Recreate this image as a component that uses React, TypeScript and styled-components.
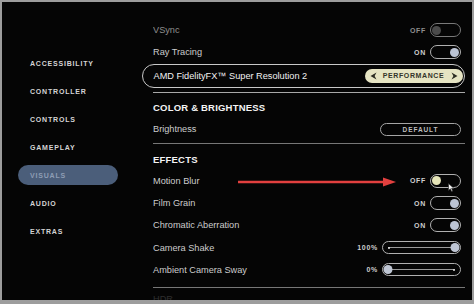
import styled, { createGlobalStyle } from "styled-components";

const GlobalStyle = createGlobalStyle`
  html, body {
    margin: 0;
    padding: 0;
    background: #9b9b9b;
  }
  body {
    font-family: "Liberation Sans", Arial, sans-serif;
  }
`;

const NAV = ["ACCESSIBILITY", "CONTROLLER", "CONTROLS", "GAMEPLAY", "VISUALS", "AUDIO", "EXTRAS"];

type Setting =
  | { kind: "toggle"; label: string; on: boolean; focus?: boolean; arrow?: boolean }
  | { kind: "slider"; label: string; value: number };

const EFFECTS: Setting[] = [
  { kind: "toggle", label: "Motion Blur", on: false, focus: true, arrow: true },
  { kind: "toggle", label: "Film Grain", on: true },
  { kind: "toggle", label: "Chromatic Aberration", on: true },
  { kind: "slider", label: "Camera Shake", value: 100 },
  { kind: "slider", label: "Ambient Camera Sway", value: 0 },
];

export default function App() {
  return (
    <>
      <GlobalStyle />
      <Frame>
        <Sidebar>
          {NAV.map((item) => (
            <NavItem key={item} $active={item === "VISUALS"}>
              {item}
            </NavItem>
          ))}
        </Sidebar>

        <Content>
          <Row $dim>
            <Label>VSync</Label>
            <ToggleControl on={false} />
          </Row>
          <Row>
            <Label>Ray Tracing</Label>
            <ToggleControl on />
          </Row>
          <SelectRow>
            <BrightLabel>AMD FidelityFX™ Super Resolution 2</BrightLabel>
            <Selector>
              <Chevron dir="left" />
              <span>PERFORMANCE</span>
              <Chevron dir="right" />
            </Selector>
          </SelectRow>
          <Divider $light />

          <Heading>COLOR &amp; BRIGHTNESS</Heading>
          <Row>
            <Label>Brightness</Label>
            <OutlineButton>DEFAULT</OutlineButton>
          </Row>
          <Divider />

          <Heading>EFFECTS</Heading>
          {EFFECTS.map((s) => (
            <Row key={s.label}>
              <Label>{s.label}</Label>
              {s.kind === "toggle" ? (
                <ToggleControl on={s.on} focus={s.focus} />
              ) : (
                <SliderControl value={s.value} />
              )}
              {s.kind === "toggle" && s.arrow && (
                <>
                  <Arrow width="160" height="10" viewBox="0 0 160 10">
                    <line x1="0" y1="5" x2="148" y2="5" stroke="#e2403f" strokeWidth="2.6" />
                    <polygon points="145,0.5 158,5 145,9.5" fill="#e2403f" />
                  </Arrow>
                  <Cursor width="7" height="9" viewBox="0 0 7 9">
                    <path d="M0.5 0.5 L0.5 7.5 L2.3 5.8 L3.6 8.5 L4.8 8 L3.6 5.4 L6 5.4 Z" fill="#f2f2f2" stroke="#222" strokeWidth="0.6" />
                  </Cursor>
                </>
              )}
            </Row>
          ))}
          <Divider $gap />
          <Row $faint>
            <Label>HDR</Label>
          </Row>
        </Content>
      </Frame>
    </>
  );
}

function ToggleControl({ on, focus }: { on: boolean; focus?: boolean }) {
  return (
    <ControlGroup>
      <StateLabel>{on ? "ON" : "OFF"}</StateLabel>
      <Toggle $on={on}>
        <Knob $color={on ? "#bcc4d4" : focus ? "#e6e5b8" : "#6d6d6d"} />
      </Toggle>
    </ControlGroup>
  );
}

function SliderControl({ value }: { value: number }) {
  return (
    <ControlGroup>
      <StateLabel>{value}%</StateLabel>
      <Slider>
        <Track>
          <SliderKnob $value={value} />
        </Track>
      </Slider>
    </ControlGroup>
  );
}

function Chevron({ dir }: { dir: "left" | "right" }) {
  return (
    <svg width="7" height="8" viewBox="0 0 7 8">
      {dir === "left" ? (
        <path d="M6.5 0.5 L0.5 4 L6.5 7.5 L4.6 4 Z" fill="#2b2b22" />
      ) : (
        <path d="M0.5 0.5 L6.5 4 L0.5 7.5 L2.4 4 Z" fill="#2b2b22" />
      )}
    </svg>
  );
}

const Frame = styled.div`
  width: 474px;
  height: 304px;
  box-sizing: border-box;
  border-style: solid;
  border-color: #9d9d9d;
  border-width: 2px 2px 4px 2px;
  background: #050505;
  display: flex;
  overflow: hidden;
`;

const Sidebar = styled.nav`
  width: 139px;
  flex-shrink: 0;
  padding-top: 51px;
  display: flex;
  flex-direction: column;
  gap: 8px;
`;

const NavItem = styled.div<{ $active?: boolean }>`
  box-sizing: border-box;
  height: 20px;
  width: 100px;
  margin-left: 16px;
  padding-left: 12px;
  display: flex;
  align-items: center;
  border-radius: 10px;
  font-size: 7px;
  font-weight: 700;
  letter-spacing: 0.8px;
  color: ${(p) => (p.$active ? "#8e9db4" : "#d4d4d4")};
  background: ${(p) => (p.$active ? "#4b5e7a" : "transparent")};
`;

const Content = styled.main`
  width: 324px;
  padding-top: 17px;
  display: flex;
  flex-direction: column;
  min-height: 0;

  & > * {
    flex-shrink: 0;
  }
`;

const Row = styled.div<{ $dim?: boolean; $faint?: boolean }>`
  position: relative;
  height: 22.25px;
  display: flex;
  align-items: center;
  justify-content: space-between;
  padding: 0 4px 0 12px;
  opacity: ${(p) => (p.$faint ? 0.2 : p.$dim ? 0.68 : 1)};
`;

const Label = styled.span`
  font-size: 9.2px;
  color: #cdcdcd;
`;

const BrightLabel = styled(Label)`
  color: #f2f2f2;
`;

const SelectRow = styled.div`
  box-sizing: border-box;
  height: 24px;
  margin-left: 1px;
  border: 1.5px solid #c8c8c8;
  border-radius: 12px;
  display: flex;
  align-items: center;
  justify-content: space-between;
  padding: 0 1.5px 0 10.5px;
`;

const Selector = styled.div`
  box-sizing: border-box;
  width: 98px;
  height: 14px;
  border-radius: 7px;
  background: #e6e4c3;
  display: flex;
  align-items: center;
  justify-content: space-between;
  padding: 0 5px;
  font-size: 7px;
  font-weight: 700;
  letter-spacing: 0.6px;
  color: #34342a;
`;

const Divider = styled.div<{ $light?: boolean; $gap?: boolean }>`
  height: 1px;
  margin: ${(p) => (p.$light ? "4px 0 0 12px" : p.$gap ? "6px 0 0 12px" : "3px 0 0 12px")};
  background: ${(p) => (p.$light ? "#a8a8a8" : "#777")};
`;

const Heading = styled.h2`
  margin: 0;
  padding: 8.5px 0 3px 12px;
  line-height: 14px;
  font-size: 9.5px;
  font-weight: 700;
  letter-spacing: 0.2px;
  color: #f4f4f4;
`;

const ControlGroup = styled.div`
  display: flex;
  align-items: center;
  gap: 4px;
`;

const StateLabel = styled.span`
  font-size: 7px;
  font-weight: 700;
  letter-spacing: 0.7px;
  color: #cfcfcf;
`;

const Toggle = styled.div<{ $on: boolean }>`
  box-sizing: border-box;
  width: 31px;
  height: 14px;
  border: 1.5px solid #b0b0b0;
  border-radius: 7px;
  display: flex;
  align-items: center;
  justify-content: ${(p) => (p.$on ? "flex-end" : "flex-start")};
  padding: 0 1px;
`;

const Knob = styled.div<{ $color: string }>`
  width: 9px;
  height: 9px;
  border-radius: 50%;
  background: ${(p) => p.$color};
`;

const OutlineButton = styled.div`
  box-sizing: border-box;
  width: 81px;
  height: 13px;
  border: 1.5px solid #a5a5a5;
  border-radius: 7px;
  display: flex;
  align-items: center;
  justify-content: center;
  font-size: 6.5px;
  font-weight: 700;
  letter-spacing: 0.9px;
  color: #bdbdbd;
`;

const Slider = styled.div`
  box-sizing: border-box;
  width: 79px;
  height: 13px;
  border: 1.5px solid #b0b0b0;
  border-radius: 7px;
  display: flex;
  align-items: center;
  padding: 0 5px;
`;

const Track = styled.div`
  position: relative;
  flex: 1;
  height: 1px;
  background: #9a9a9a;

  &::before,
  &::after {
    content: "";
    position: absolute;
    top: -0.5px;
    width: 2px;
    height: 2px;
    border-radius: 50%;
    background: #e0e0e0;
  }
  &::before {
    left: 0;
  }
  &::after {
    right: 0;
  }
`;

const SliderKnob = styled.div<{ $value: number }>`
  position: absolute;
  top: -4px;
  left: ${(p) => p.$value}%;
  transform: translateX(-50%);
  width: 9px;
  height: 9px;
  border-radius: 50%;
  background: #bfc6d4;
  z-index: 1;
`;

const Arrow = styled.svg`
  position: absolute;
  left: 97px;
  top: 7px;
`;

const Cursor = styled.svg`
  position: absolute;
  right: 10px;
  top: 13px;
`;
